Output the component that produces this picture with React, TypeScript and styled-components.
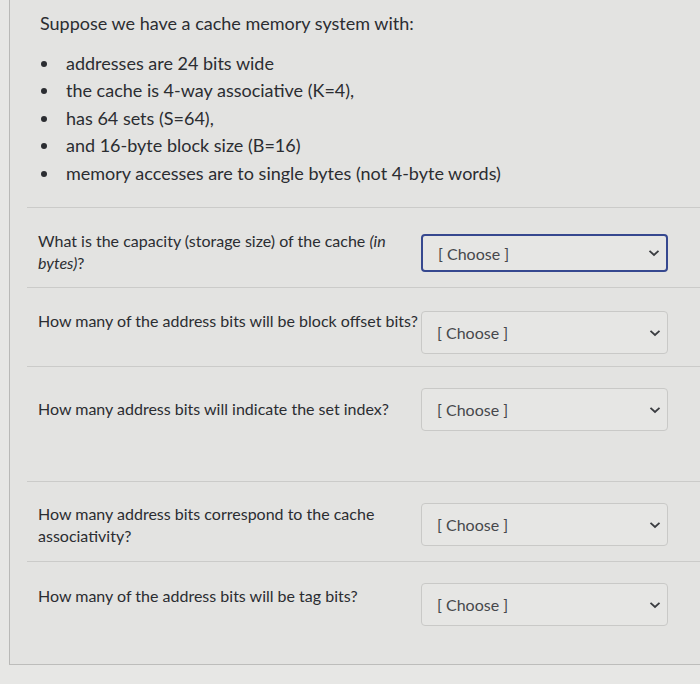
import React from "react";
import styled, { createGlobalStyle } from "styled-components";

const GlobalStyle = createGlobalStyle`
	html, body {
		margin: 0;
		padding: 0;
		background: #e7e7e5;
	}
	body {
		font-family: Lato, "Liberation Sans", sans-serif;
		color: #2b2d31;
	}
`;

const Page = styled.div`
	width: 700px;
	height: 684px;
	overflow: hidden;
	padding-left: 9px;
	box-sizing: border-box;
`;

const Panel = styled.div`
	height: 665px;
	border-left: 1px solid #b9b9b7;
	border-bottom: 1px solid #bdbdbb;
	background: #e3e3e1;
	box-sizing: border-box;
	padding: 10px 0 0 30px;
`;

const Intro = styled.p`
	margin: 0;
	font-size: 18px;
	line-height: 27px;
`;

const Facts = styled.ul`
	list-style: none;
	margin: 13px 0 0;
	padding: 0;
`;

const Fact = styled.li`
	position: relative;
	padding-left: 26px;
	font-size: 18px;
	line-height: 27.4px;

	&::before {
		content: "";
		position: absolute;
		left: 1px;
		top: 11px;
		width: 6px;
		height: 6px;
		border-radius: 50%;
		background: #2b2d31;
	}
`;

const Questions = styled.div`
	margin: 20px 0 0 -13px;
`;

const Row = styled.div<{ $h: number }>`
	display: flex;
	align-items: flex-start;
	height: ${({ $h }) => $h}px;
	box-sizing: border-box;
	border-top: 1px solid #cbcbc9;
	padding: 21px 32px 0 11px;
`;

const Label = styled.div<{ $top: number }>`
	flex: 1;
	max-width: 384px;
	padding-top: ${({ $top }) => $top}px;
	font-size: 16px;
	line-height: 22px;
`;

const SelectBox = styled.div<{ $focus?: boolean; $top: number }>`
	margin-left: auto;
	margin-top: ${({ $top }) => $top}px;
	width: 247px;
	height: ${({ $focus }) => ($focus ? 38 : 43)}px;
	box-sizing: border-box;
	display: flex;
	align-items: center;
	justify-content: space-between;
	padding: 0 6px 0 15px;
	border-radius: 4px;
	background: #e6e6e4;
	border: ${({ $focus }) =>
		$focus ? "2px solid #36488f" : "1px solid #c9c9c7"};
	font-size: 16px;
	color: #46484c;
`;

const Chevron = () => (
	<svg width="12" height="8" viewBox="0 0 12 8">
		<path d="M1.5 1.8 L6 6 L10.5 1.8" fill="none" stroke="#3a3c40" strokeWidth="1.8" />
	</svg>
);

const questions = [
	{
		h: 80,
		top: 1,
		selTop: 5,
		focus: true,
		label: (
			<>
				What is the capacity (storage size) of the cache <i>(in</i> <i>bytes)</i>?
			</>
		),
	},
	{ h: 79, top: 1, selTop: 2, label: "How many of the address bits will be block offset bits?" },
	{ h: 115, top: 10, selTop: 0, label: "How many address bits will indicate the set index?" },
	{ h: 80, top: 0, selTop: 0, label: "How many address bits correspond to the cache associativity?" },
	{ h: 103, top: 2, selTop: 0, label: "How many of the address bits will be tag bits?" },
];

const App: React.FC = () => (
	<>
		<GlobalStyle />
		<Page>
			<Panel>
				<Intro>Suppose we have a cache memory system with:</Intro>
				<Facts>
					<Fact>addresses are 24 bits wide</Fact>
					<Fact>the cache is 4-way associative (K=4),</Fact>
					<Fact>has 64 sets (S=64),</Fact>
					<Fact>and 16-byte block size (B=16)</Fact>
					<Fact>memory accesses are to single bytes (not 4-byte words)</Fact>
				</Facts>
				<Questions>
					{questions.map((q, i) => (
						<Row key={i} $h={q.h}>
							<Label $top={q.top}>{q.label}</Label>
							<SelectBox $focus={q.focus} $top={q.selTop}>
								<span>[ Choose ]</span>
								<Chevron />
							</SelectBox>
						</Row>
					))}
				</Questions>
			</Panel>
		</Page>
	</>
);

export default App;
